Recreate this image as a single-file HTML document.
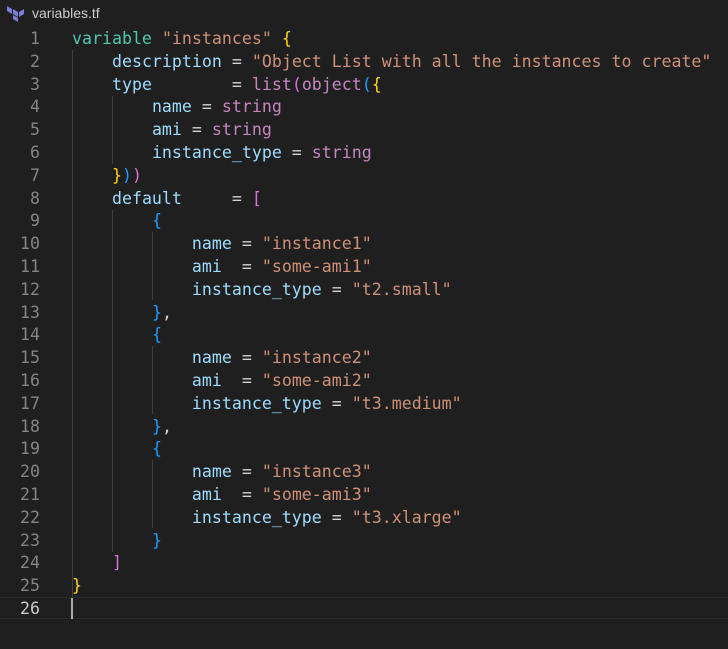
<!DOCTYPE html>
<html><head><style>
body{margin:0;width:728px;height:649px;background:#1f1f1f;overflow:hidden;font-family:"DejaVu Sans Mono","Liberation Mono",monospace;}
.tab{position:absolute;left:0;top:0;width:728px;height:27px;background:#1f1f1f;}
.tab span{position:absolute;left:32px;top:5px;font:14px "Liberation Sans",sans-serif;color:#cccccc;}
.code{position:absolute;left:0;top:28px;width:728px;overflow:hidden;}
.l{position:relative;height:22.8px;line-height:22.8px;font-size:16.6px;white-space:pre;}
.n{position:absolute;left:0;width:40px;text-align:right;color:#858585;}
.n.c{color:#cccccc}
.t{position:absolute;left:72px;color:#d4d4d4;}
.g{position:absolute;width:1px;background:#404040;}
.k{color:#4ec9b0}.s{color:#ce9178}.a{color:#9cdcfe}.p{color:#c586c0}
.y{color:#ffd700}.m{color:#da70d6}.b{color:#179fff}
.cur{position:absolute;left:0;top:597px;width:728px;height:22px;border-top:1px solid #2b2b2b;border-bottom:1px solid #2b2b2b;box-sizing:border-box;}
.caret{position:absolute;left:71px;top:598px;width:2px;height:21px;background:#aeafad;}
</style></head><body>
<div class="tab"><svg style="position:absolute;left:7px;top:6px" width="18" height="16" viewBox="0 0 18 16"><path d="M0 0l5 3v5L0 5z M6 3l5 3v5L6 8z M12 6l5-3v5l-5 3z M6 9l5 3v4L6 13z" fill="#7b7fd8"/></svg><span>variables.tf</span></div>
<div class="g" style="left:72px;top:50px;height:547px"></div>
<div class="g" style="left:112px;top:96px;height:68px"></div>
<div class="g" style="left:112px;top:210px;height:342px"></div>
<div class="g" style="left:152px;top:232px;height:68px"></div>
<div class="g" style="left:152px;top:346px;height:68px"></div>
<div class="g" style="left:152px;top:460px;height:68px"></div>
<div class="cur"></div>
<div class="code">
<div class="l"><span class="n">1</span><span class="t"><span class="k">variable</span> <span class="s">"instances"</span> <span class="y">{</span></span></div>
<div class="l"><span class="n">2</span><span class="t">    <span class="a">description</span> = <span class="s">"Object List with all the instances to create"</span></span></div>
<div class="l"><span class="n">3</span><span class="t">    <span class="a">type</span>        = <span class="p">list</span><span class="m">(</span><span class="p">object</span><span class="b">(</span><span class="y">{</span></span></div>
<div class="l"><span class="n">4</span><span class="t">        <span class="a">name</span> = <span class="p">string</span></span></div>
<div class="l"><span class="n">5</span><span class="t">        <span class="a">ami</span> = <span class="p">string</span></span></div>
<div class="l"><span class="n">6</span><span class="t">        <span class="a">instance_type</span> = <span class="p">string</span></span></div>
<div class="l"><span class="n">7</span><span class="t">    <span class="y">}</span><span class="b">)</span><span class="m">)</span></span></div>
<div class="l"><span class="n">8</span><span class="t">    <span class="a">default</span>     = <span class="m">[</span></span></div>
<div class="l"><span class="n">9</span><span class="t">        <span class="b">{</span></span></div>
<div class="l"><span class="n">10</span><span class="t">            <span class="a">name</span> = <span class="s">"instance1"</span></span></div>
<div class="l"><span class="n">11</span><span class="t">            <span class="a">ami</span>  = <span class="s">"some-ami1"</span></span></div>
<div class="l"><span class="n">12</span><span class="t">            <span class="a">instance_type</span> = <span class="s">"t2.small"</span></span></div>
<div class="l"><span class="n">13</span><span class="t">        <span class="b">}</span>,</span></div>
<div class="l"><span class="n">14</span><span class="t">        <span class="b">{</span></span></div>
<div class="l"><span class="n">15</span><span class="t">            <span class="a">name</span> = <span class="s">"instance2"</span></span></div>
<div class="l"><span class="n">16</span><span class="t">            <span class="a">ami</span>  = <span class="s">"some-ami2"</span></span></div>
<div class="l"><span class="n">17</span><span class="t">            <span class="a">instance_type</span> = <span class="s">"t3.medium"</span></span></div>
<div class="l"><span class="n">18</span><span class="t">        <span class="b">}</span>,</span></div>
<div class="l"><span class="n">19</span><span class="t">        <span class="b">{</span></span></div>
<div class="l"><span class="n">20</span><span class="t">            <span class="a">name</span> = <span class="s">"instance3"</span></span></div>
<div class="l"><span class="n">21</span><span class="t">            <span class="a">ami</span>  = <span class="s">"some-ami3"</span></span></div>
<div class="l"><span class="n">22</span><span class="t">            <span class="a">instance_type</span> = <span class="s">"t3.xlarge"</span></span></div>
<div class="l"><span class="n">23</span><span class="t">        <span class="b">}</span></span></div>
<div class="l"><span class="n">24</span><span class="t">    <span class="m">]</span></span></div>
<div class="l"><span class="n">25</span><span class="t"><span class="y">}</span></span></div>
<div class="l"><span class="n c">26</span><span class="t"></span></div>
</div>
<div class="caret"></div>
</body></html>
